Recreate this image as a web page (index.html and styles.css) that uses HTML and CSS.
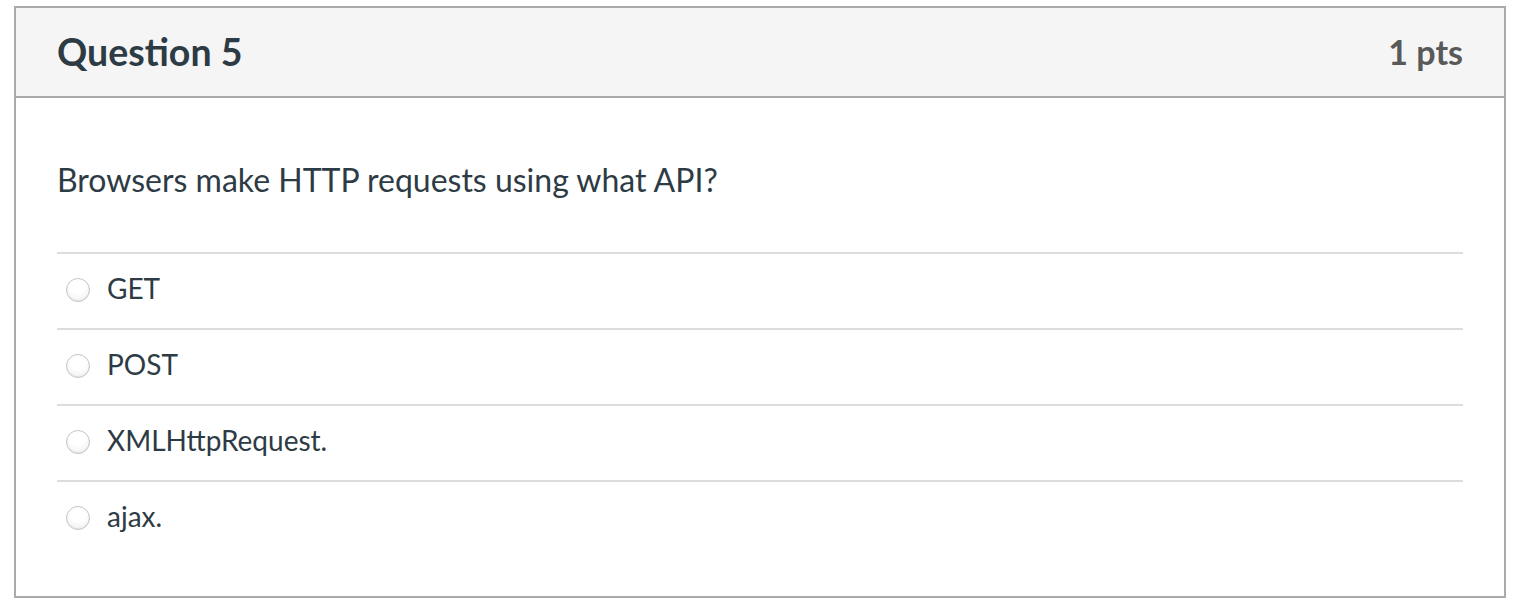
FILE: index.html
```html
<!DOCTYPE html>
<html lang="en">
<head>
<meta charset="utf-8">
<title>Question 5</title>
<link rel="stylesheet" href="styles.css">
</head>
<body>
<div class="question">
  <div class="question-header">
    <h2 class="question-title">Question 5</h2>
    <span class="question-points">1 pts</span>
  </div>
  <div class="question-body">
    <p class="question-text">Browsers make HTTP requests using what API?</p>
    <div class="answers">
      <label class="answer"><span class="radio"></span><span class="answer-label">GET</span></label>
      <label class="answer"><span class="radio"></span><span class="answer-label">POST</span></label>
      <label class="answer"><span class="radio"></span><span class="answer-label">XMLHttpRequest.</span></label>
      <label class="answer"><span class="radio"></span><span class="answer-label">ajax.</span></label>
    </div>
  </div>
</div>
</body>
</html>
```
FILE: styles.css
```css
* { box-sizing: border-box; }
html, body { margin: 0; padding: 0; background: #fff; }
body {
  font-family: Lato, "Open Sans", sans-serif;
  color: #2d3b45;
  padding: 6px 0 0 14px;
}
.question {
  width: 1492px;
  border: 2px solid #aaaaaa;
  background: #fff;
}
.question-header {
  height: 90px;
  background: #f5f5f5;
  border-bottom: 2px solid #aaaaaa;
  padding: 0 41px;
  display: flex;
  align-items: center;
  justify-content: space-between;
}
.question-title {
  margin: 0;
  font-size: 37.5px;
  font-weight: 700;
  color: #2d3b45;
  line-height: 40px;
}
.question-points {
  font-size: 34px;
  font-weight: 700;
  color: #595959;
  line-height: 40px;
}
.question-body {
  padding: 62px 41px 40px;
}
.question-text {
  margin: 0 0 52px;
  font-size: 32px;
  line-height: 40px;
}
.answers { display: flex; flex-direction: column; }
.answer {
  display: flex;
  align-items: flex-start;
  height: 76px;
  border-top: 2px solid #dddddd;
  padding: 19px 0 0 9px;
}
.radio {
  width: 24px;
  height: 24px;
  margin-top: 5px;
  border-radius: 50%;
  border: 1px solid #c4c4c4;
  background: radial-gradient(circle at 50% 30%, #ffffff 40%, #ececec 100%);
  box-shadow: inset 0 -1px 1px rgba(0,0,0,0.05);
  flex: none;
}
.answer-label {
  margin-left: 17px;
  font-size: 28px;
  line-height: 30px;
  color: #2d3b45;
}
```
